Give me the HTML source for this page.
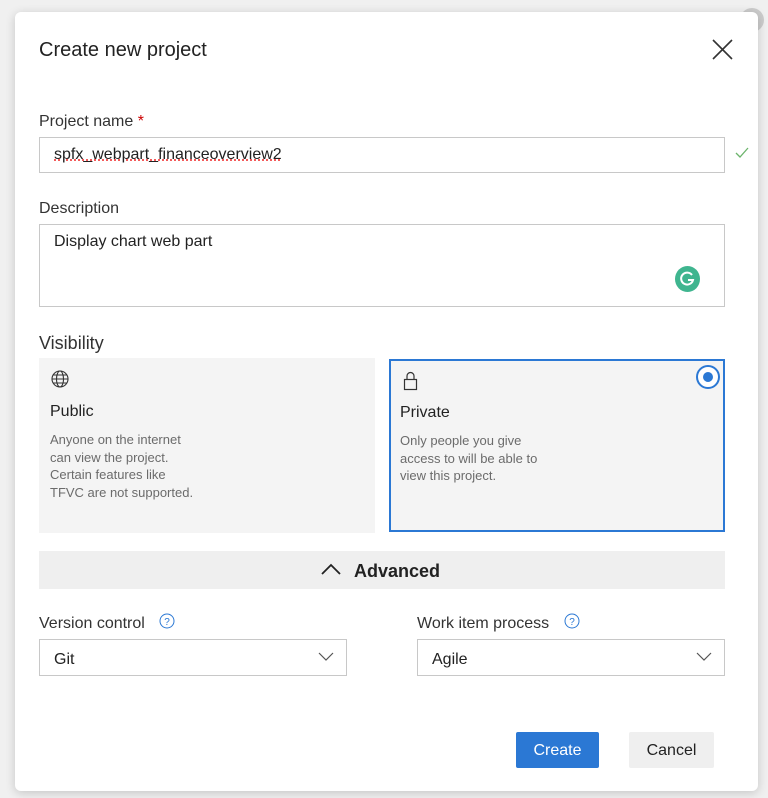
<!DOCTYPE html>
<html><head><style>
*{box-sizing:border-box;margin:0;padding:0}
body{width:768px;height:798px;background:#f0f0f0;font-family:"Liberation Sans",sans-serif;position:relative;overflow:hidden;color:#222}
.dlg{position:absolute;left:15px;top:12px;width:743px;height:779px;background:#fff;border-radius:6px;box-shadow:0 2px 10px rgba(0,0,0,.18)}
.a{position:absolute}
.lbl{font-size:16px;color:#333}
.inp{border:1px solid #c8c8c8;background:#fff}
.card{background:#f4f4f4}
.card h4{font-weight:normal;font-size:16px;color:#222;position:absolute;left:11px;top:45px}
.card p{position:absolute;left:11px;top:73px;font-size:13px;line-height:17.5px;color:#6b6b6b}
.sel{border:1px solid #c8c8c8;font-size:16px;padding:11px 14px 0;color:#222}
</style></head><body>
<div class="a" style="left:740px;top:8px;width:24px;height:24px;border-radius:50%;background:#ccc"></div>
<div class="dlg"></div>
<div class="a" style="left:39px;top:39px;font-size:20px;color:#222">Create new project</div>
<svg class="a" style="left:712px;top:39px" width="21" height="21"><path d="M1 1L20 20M20 1L1 20" stroke="#333" stroke-width="1.6"/></svg>
<div class="a lbl" style="left:39px;top:113px">Project name <span style="color:#c00">*</span></div>
<div class="a inp" style="left:39px;top:137px;width:686px;height:36px"></div>
<div class="a" style="left:54px;top:146px;font-size:16px;text-decoration:underline dotted #e33">spfx_webpart_financeoverview2</div>
<svg class="a" style="left:735px;top:147px" width="14" height="12"><path d="M1 6L5 10L13 1" stroke="#6cb46c" fill="none" stroke-width="1.3"/></svg>
<div class="a lbl" style="left:39px;top:200px">Description</div>
<div class="a inp" style="left:39px;top:224px;width:686px;height:83px"></div>
<div class="a" style="left:54px;top:233px;font-size:16px">Display chart web part</div>
<div class="a" style="left:675px;top:266px;width:25px;height:26px;border-radius:50%;background:#3fb58f"></div>
<svg class="a" style="left:675px;top:266px" width="25" height="26"><path d="M17 9A6 6 0 1 0 18 14H13" stroke="#fff" stroke-width="2" fill="none"/></svg>
<div class="a" style="left:39px;top:333px;font-size:18px;color:#333">Visibility</div>
<div class="a card" style="left:39px;top:358px;width:336px;height:175px">
<svg class="a" style="left:12px;top:12px" width="18" height="18"><g fill="none" stroke="#333" stroke-width="1.1"><circle cx="9" cy="9" r="8"/><ellipse cx="9" cy="9" rx="3.5" ry="8"/><path d="M1 9H17M2.5 5H15.5M2.5 13H15.5"/></g></svg>
<h4>Public</h4><p>Anyone on the internet<br>can view the project.<br>Certain features like<br>TFVC are not supported.</p></div>
<div class="a card" style="left:389px;top:359px;width:336px;height:173px;border:2px solid #2b78d4">
<svg class="a" style="left:12px;top:10px" width="16" height="20"><g fill="none" stroke="#333" stroke-width="1.2"><rect x="1.5" y="8.5" width="12" height="10"/><path d="M4 8.5V5a3.5 3.5 0 0 1 7 0V8.5"/></g></svg>
<h4 style="left:9px;top:43px">Private</h4><p style="left:9px;top:71px">Only people you give<br>access to will be able to<br>view this project.</p>
<div class="a" style="left:305px;top:4px;width:24px;height:24px;border-radius:50%;border:2px solid #2b78d4;background:#fff"><div class="a" style="left:5px;top:5px;width:10px;height:10px;border-radius:50%;background:#2b78d4"></div></div></div>
<div class="a" style="left:39px;top:551px;width:686px;height:38px;background:#efefef"></div>
<svg class="a" style="left:321px;top:563px" width="20" height="12"><path d="M1 11L10 2L19 11" stroke="#222" fill="none" stroke-width="1.8"/></svg>
<div class="a" style="left:354px;top:561px;font-size:18px;font-weight:bold;color:#222">Advanced</div>
<div class="a lbl" style="left:39px;top:615px">Version control</div>
<svg class="a" style="left:159px;top:613px" width="16" height="16"><circle cx="8" cy="8" r="7" fill="none" stroke="#2b78d4"/><text x="8" y="12" font-size="10" text-anchor="middle" fill="#2b78d4" font-family="Liberation Sans">?</text></svg>
<div class="a sel" style="left:39px;top:639px;width:308px;height:37px">Git</div>
<svg class="a" style="left:318px;top:652px" width="16" height="10"><path d="M1 1L8 8L15 1" stroke="#555" fill="none" stroke-width="1.2"/></svg>
<div class="a lbl" style="left:417px;top:615px">Work item process</div>
<svg class="a" style="left:564px;top:613px" width="16" height="16"><circle cx="8" cy="8" r="7" fill="none" stroke="#2b78d4"/><text x="8" y="12" font-size="10" text-anchor="middle" fill="#2b78d4" font-family="Liberation Sans">?</text></svg>
<div class="a sel" style="left:417px;top:639px;width:308px;height:37px">Agile</div>
<svg class="a" style="left:696px;top:652px" width="16" height="10"><path d="M1 1L8 8L15 1" stroke="#555" fill="none" stroke-width="1.2"/></svg>
<div class="a" style="left:516px;top:732px;width:83px;height:36px;background:#2b78d4;border-radius:2px;color:#fff;font-size:16px;text-align:center;line-height:38px">Create</div>
<div class="a" style="left:629px;top:732px;width:85px;height:36px;background:#efefef;border-radius:2px;color:#222;font-size:16px;text-align:center;line-height:38px">Cancel</div>
</body></html>
